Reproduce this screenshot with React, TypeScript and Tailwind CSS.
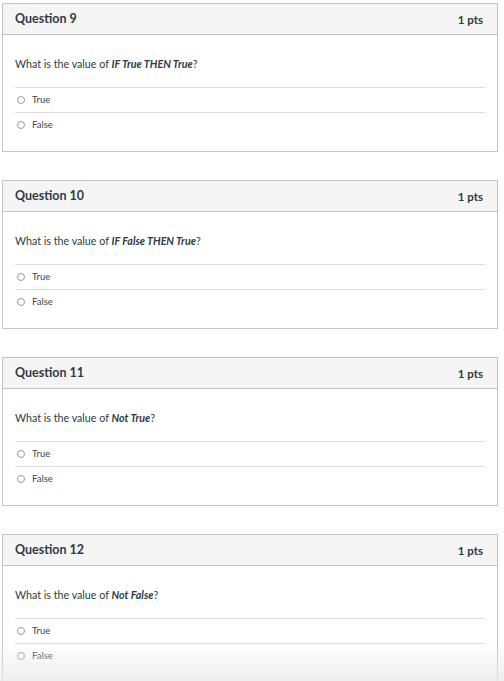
import React from "react";

type Question = {
  n: number;
  pre: string;
  expr: string;
};

const questions: Question[] = [
  { n: 9, pre: "What is the value of ", expr: "IF True THEN True" },
  { n: 10, pre: "What is the value of ", expr: "IF False THEN True" },
  { n: 11, pre: "What is the value of ", expr: "Not True" },
  { n: 12, pre: "What is the value of ", expr: "Not False" },
];

function Option({ label }: { label: string }) {
  return (
    <div className="flex h-[25px] items-center border-t border-[#dcdcdc] pl-[2px]">
      <span className="h-[8px] w-[8px] rounded-full border border-[#9a9a9a] bg-white" />
      <span className="ml-[7px] text-[9.5px] text-[#3b4650]">{label}</span>
    </div>
  );
}

function QuestionCard({ q }: { q: Question }) {
  return (
    <div className="border border-[#c4c4c4] bg-white">
      <div className="flex h-[31px] items-center justify-between border-b border-[#c4c4c4] bg-[#f5f5f5] pl-[12px] pr-[14px] pt-[1px] text-[#2d3b45]">
        <span className="text-[12.5px] font-bold">Question {q.n}</span>
        <span className="text-[11.5px] font-bold">1 pts</span>
      </div>
      <div className="px-[12px] pb-[14px] pt-[22px]">
        <p className="mb-[17px] h-[13px] text-[10.7px] leading-[13px] text-[#2d3b45]">
          {q.pre}
          <b className="italic">{q.expr}</b>?
        </p>
        <Option label="True" />
        <Option label="False" />
      </div>
    </div>
  );
}

export default function App() {
  return (
    <main
      className="relative h-[681px] overflow-hidden bg-white"
      style={{ fontFamily: "Lato, 'Liberation Sans', sans-serif" }}
    >
      <div className="flex w-[496px] translate-x-[2px] translate-y-[3px] flex-col gap-[28px]">
        {questions.map((q) => (
          <QuestionCard key={q.n} q={q} />
        ))}
      </div>
      <div className="pointer-events-none absolute bottom-0 left-0 right-0 h-[38px] bg-gradient-to-b from-transparent to-[#e9e9e9]/80" />
    </main>
  );
}
